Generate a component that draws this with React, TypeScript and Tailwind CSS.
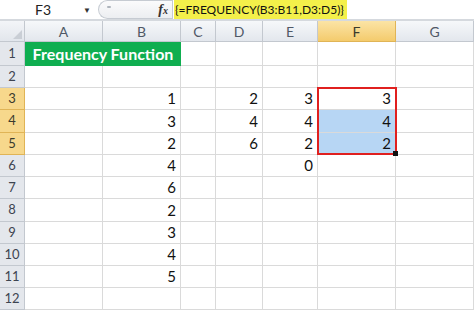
const font = { fontFamily: '"Lato", "Noto Sans", sans-serif' };

const cols = ['A', 'B', 'C', 'D', 'E', 'F', 'G'];

type Row = { n: number; cells: (string | number | null)[] };

const rows: Row[] = [
  { n: 1, cells: [null, null, null, null, null, null, null] },
  { n: 2, cells: [null, null, null, null, null, null, null] },
  { n: 3, cells: [null, 1, null, 2, 3, 3, null] },
  { n: 4, cells: [null, 3, null, 4, 4, 4, null] },
  { n: 5, cells: [null, 2, null, 6, 2, 2, null] },
  { n: 6, cells: [null, 4, null, null, 0, null, null] },
  { n: 7, cells: [null, 6, null, null, null, null, null] },
  { n: 8, cells: [null, 2, null, null, null, null, null] },
  { n: 9, cells: [null, 3, null, null, null, null, null] },
  { n: 10, cells: [null, 4, null, null, null, null, null] },
  { n: 11, cells: [null, 5, null, null, null, null, null] },
  { n: 12, cells: [null, null, null, null, null, null, null] },
];

function FormulaBar() {
  return (
    <div className="flex h-[21px] items-stretch border-b-2 border-[#d5d9de] bg-white">
      <div className="flex w-[96px] shrink-0 items-center text-[14px] text-[#222]">
        <span className="ml-[35px]">F3</span>
        <span className="ml-auto mr-[5px] text-[8px] text-[#333]">▼</span>
      </div>
      <div className="ml-[2px] flex w-[74px] shrink-0 items-center justify-between rounded-l-full border border-r-0 border-[#c6cbd2] bg-gradient-to-b from-[#fbfbfc] to-[#eceef1] pl-[8px] pr-[4px]">
        <span className="mb-[6px] h-[2px] w-[4px] rounded bg-[#aeb4bc]" />
        <span className="text-[14px] italic font-semibold text-[#333]" style={{ fontFamily: '"Liberation Serif", serif' }}>
          f<span className="text-[10px]">x</span>
        </span>
      </div>
      <div className="flex flex-1 items-center border-l border-[#c6cbd2] pl-[1px]">
        <span className="flex h-full items-center bg-[#f4f04a] pl-[1px] pr-[3px] text-[12px] text-[#111]">
          {'{=FREQUENCY(B3:B11,D3:D5)}'}
        </span>
      </div>
    </div>
  );
}

export default function App() {
  return (
    <div className="h-[310px] w-[474px] overflow-hidden bg-white" style={font}>
      <FormulaBar />
      <div className="grid grid-cols-[25px_78px_78px_35px_47px_55px_78px_78px] grid-rows-[21px_24px_22px_22px_23px_22px_22px_22px_23px_22px_22px_22px_22px]">
        <div className="relative border-r border-b border-[#c3c8cf] bg-gradient-to-b from-[#f3f5f8] to-[#e2e6ec]">
          <div className="absolute right-[2px] bottom-[2px] h-0 w-0 border-l-[9px] border-b-[9px] border-l-transparent border-b-[#c9ced5]" />
        </div>
        {cols.map((c) => (
          <div
            key={c}
            className={
              c === 'F'
                ? 'flex items-center justify-center border-r border-b border-[#e0b456] bg-gradient-to-b from-[#fbe4a5] to-[#f4cb6c] text-[14px] text-[#3b3b2c]'
                : 'flex items-center justify-center border-r border-b border-[#c3c8cf] bg-gradient-to-b from-[#f6f8fa] to-[#e3e7ed] text-[14px] text-[#505866]'
            }
          >
            {c}
          </div>
        ))}
        {rows.map((r) => (
          <Row key={r.n} row={r} />
        ))}
      </div>
    </div>
  );
}

function Row({ row }: { row: Row }) {
  const sel = row.n >= 3 && row.n <= 5;
  return (
    <>
      <div
        className={
          sel
            ? 'flex items-center justify-center border-r border-b border-[#e0b456] bg-[#f7d88c] text-[13px] text-[#3b3b2c]'
            : 'flex items-center justify-center border-r border-b border-[#c3c8cf] bg-[#e4e7ec] text-[13px] text-[#3d4450]'
        }
      >
        {row.n}
      </div>
      {row.n === 1 ? (
        <>
          <div className="col-span-2 flex items-center justify-center bg-[#0fae50] text-[16px] font-bold text-white">
            Frequency Function
          </div>
          {[2, 3, 4, 5, 6].map((i) => (
            <Cell key={i} value={null} />
          ))}
        </>
      ) : (
        row.cells.map((v, i) => (
          <Cell
            key={i}
            value={v}
            blue={i === 5 && (row.n === 4 || row.n === 5)}
            box={i === 5 && row.n === 3}
          />
        ))
      )}
    </>
  );
}

function Cell({ value, blue, box }: { value: string | number | null; blue?: boolean; box?: boolean }) {
  return (
    <div
      className={
        (blue ? 'bg-[#b7d6f4] ' : 'bg-white ') +
        'relative flex items-center justify-end border-r border-b border-[#dadada] pr-[4px] text-[15px] text-[#111]'
      }
    >
      {value}
      {box && (
        <div className="absolute -top-[1px] -left-[1px] z-10 h-[68px] w-[80px] border-2 border-[#e0201f]">
          <div className="absolute -right-[3px] -bottom-[3px] h-[5px] w-[5px] bg-[#111]" />
        </div>
      )}
    </div>
  );
}
